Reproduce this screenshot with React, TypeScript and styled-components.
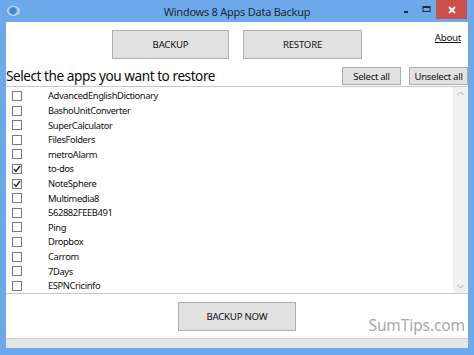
import React from "react";
import styled, { createGlobalStyle } from "styled-components";

const Global = createGlobalStyle`
  html, body { margin: 0; padding: 0; }
  body {
    width: 474px; height: 355px; overflow: hidden;
    background: #6ca8ea;
    font-family: "Noto Sans", "Open Sans", sans-serif;
  }
`;

const Window = styled.div`
  width: 474px;
  height: 355px;
  display: flex;
  flex-direction: column;
  background: #6ca8ea;
  position: relative;
`;

const TitleBar = styled.div`
  height: 22px;
  flex: none;
  display: flex;
  align-items: center;
  position: relative;
`;

const AppIcon = styled.div`
  width: 11px;
  height: 8px;
  margin-left: 7px;
  border-radius: 50%;
  background: radial-gradient(circle at 45% 45%, #3d86d6 0 40%, #9cc3ea 60%, #dbe8f5 100%);
  border: 1px solid #c9d6e4;
`;

const Title = styled.div`
  position: absolute;
  left: 0;
  right: 0;
  top: 4px;
  text-align: center;
  font-size: 11px;
  color: #1e2a38;
  letter-spacing: -0.25px;
`;

const Controls = styled.div`
  margin-left: auto;
  margin-right: 7px;
  display: flex;
  align-items: flex-start;
  height: 100%;
`;

const CtrlBtn = styled.div`
  width: 20px;
  height: 19px;
  display: flex;
  align-items: center;
  justify-content: center;
`;

const CloseBtn = styled(CtrlBtn)`
  width: 31px;
  background: #c9504b;
`;

const Content = styled.div`
  flex: 1;
  margin: 0 6px;
  background: #fff;
  display: flex;
  flex-direction: column;
  position: relative;
`;

const TopRow = styled.div`
  height: 45px;
  display: flex;
  justify-content: center;
  align-items: flex-start;
  padding-top: 8px;
  box-sizing: border-box;
  gap: 14px;
  position: relative;
`;

const Button = styled.div<{ $w: number }>`
  width: ${(p) => p.$w}px;
  height: 29px;
  box-sizing: border-box;
  background: #e1e1e1;
  border: 1px solid #adadad;
  display: flex;
  align-items: center;
  justify-content: center;
  font-size: 9.6px;
  color: #111;
  letter-spacing: -0.2px;
`;

const About = styled.a`
  position: absolute;
  right: 7px;
  top: 9px;
  font-size: 9.6px;
  color: #111;
  text-decoration: underline;
  letter-spacing: -0.2px;
`;

const HeaderRow = styled.div`
  height: 19px;
  display: flex;
  align-items: flex-start;
`;

const Prompt = styled.div`
  font-size: 13.6px;
  line-height: 19px;
  margin-top: -1px;
  color: #0a0a0a;
  letter-spacing: -0.45px;
  flex: 1;
`;

const SmallBtn = styled.div<{ $w: number }>`
  width: ${(p) => p.$w}px;
  height: 18px;
  box-sizing: border-box;
  background: #e1e1e1;
  border: 1px solid #adadad;
  display: flex;
  align-items: center;
  justify-content: center;
  font-size: 9.6px;
  color: #111;
  margin-left: 8px;
  letter-spacing: -0.3px;
`;

const ListBox = styled.div`
  height: 208px;
  box-sizing: border-box;
  border-top: 1px solid #c8c8c8;
  border-bottom: 1px solid #c8c8c8;
  display: flex;
`;

const Rows = styled.div`
  flex: 1;
  padding-top: 1.7px;
`;

const Row = styled.div`
  height: 14.6px;
  display: flex;
  align-items: center;
  padding-left: 6px;
`;

const Box = styled.div`
  width: 10px;
  height: 10px;
  box-sizing: border-box;
  border: 1px solid #7a7a7a;
  background: #fff;
  display: flex;
  align-items: center;
  justify-content: center;
`;

const Label = styled.span`
  margin-left: 26px;
  font-size: 9.4px;
  color: #111;
  letter-spacing: -0.4px;
`;

const ScrollBar = styled.div`
  width: 14px;
  background: #f0f0f0;
  display: flex;
  flex-direction: column;
  justify-content: space-between;
  align-items: center;
  padding: 4px 0 4px;
  margin-right: 1px;
`;

const Footer = styled.div`
  flex: 1;
  display: flex;
  justify-content: center;
  padding-top: 8px;
  box-sizing: border-box;
`;

const Watermark = styled.div`
  position: absolute;
  right: 3px;
  bottom: 12px;
  font-size: 15.5px;
  color: #a9a9a9;
  letter-spacing: -0.1px;
`;

const StatusBar = styled.div`
  height: 10px;
  flex: none;
  background: #e6e6e6;
  border-top: 1px solid #d6cfcf;
  box-sizing: border-box;
`;

const BottomFrame = styled.div`
  height: 7px;
  flex: none;
`;

const apps: [string, boolean][] = [
  ["AdvancedEnglishDictionary", false],
  ["BashoUnitConverter", false],
  ["SuperCalculator", false],
  ["FilesFolders", false],
  ["metroAlarm", false],
  ["to-dos", true],
  ["NoteSphere", true],
  ["Multimedia8", false],
  ["562882FEEB491", false],
  ["Ping", false],
  ["Dropbox", false],
  ["Carrom", false],
  ["7Days", false],
  ["ESPNCricinfo", false],
];

const Check = () => (
  <svg width="8" height="8" viewBox="0 0 8 8">
    <polyline points="1,4 3,6.5 7,1" fill="none" stroke="#222" strokeWidth="1.3" />
  </svg>
);

const Chevron = ({ up }: { up: boolean }) => (
  <svg width="7" height="5" viewBox="0 0 7 5">
    <polyline
      points={up ? "0.5,4 3.5,1 6.5,4" : "0.5,1 3.5,4 6.5,1"}
      fill="none"
      stroke="#a6a6a6"
      strokeWidth="1"
    />
  </svg>
);

export default function App() {
  return (
    <>
      <Global />
      <Window>
        <TitleBar>
          <AppIcon />
          <Title>Windows 8 Apps Data Backup</Title>
          <Controls>
            <CtrlBtn>
              <svg width="6" height="8" viewBox="0 0 6 8">
                <rect x="1" y="5" width="4" height="2" fill="#1e2a38" />
              </svg>
            </CtrlBtn>
            <CtrlBtn>
              <svg width="9" height="9" viewBox="0 0 9 9">
                <rect x="1" y="1.5" width="7" height="5" fill="none" stroke="#1e2a38" />
                <rect x="1" y="1" width="7" height="2" fill="#1e2a38" />
              </svg>
            </CtrlBtn>
            <CloseBtn>
              <svg width="8" height="8" viewBox="0 0 8 8">
                <path d="M1 1 L7 7 M7 1 L1 7" stroke="#fff" strokeWidth="1.8" />
              </svg>
            </CloseBtn>
          </Controls>
        </TitleBar>
        <Content>
          <TopRow>
            <Button $w={117}>BACKUP</Button>
            <Button $w={119}>RESTORE</Button>
            <About>About</About>
          </TopRow>
          <HeaderRow>
            <Prompt>Select the apps you want to restore</Prompt>
            <SmallBtn $w={59}>Select all</SmallBtn>
            <SmallBtn $w={59}>Unselect all</SmallBtn>
          </HeaderRow>
          <ListBox>
            <Rows>
              {apps.map(([name, checked]) => (
                <Row key={name}>
                  <Box>{checked && <Check />}</Box>
                  <Label>{name}</Label>
                </Row>
              ))}
            </Rows>
            <ScrollBar>
              <Chevron up />
              <Chevron up={false} />
            </ScrollBar>
          </ListBox>
          <Footer>
            <Button $w={118}>BACKUP NOW</Button>
          </Footer>
          <Watermark>SumTips.com</Watermark>
          <StatusBar />
        </Content>
        <BottomFrame />
      </Window>
    </>
  );
}
